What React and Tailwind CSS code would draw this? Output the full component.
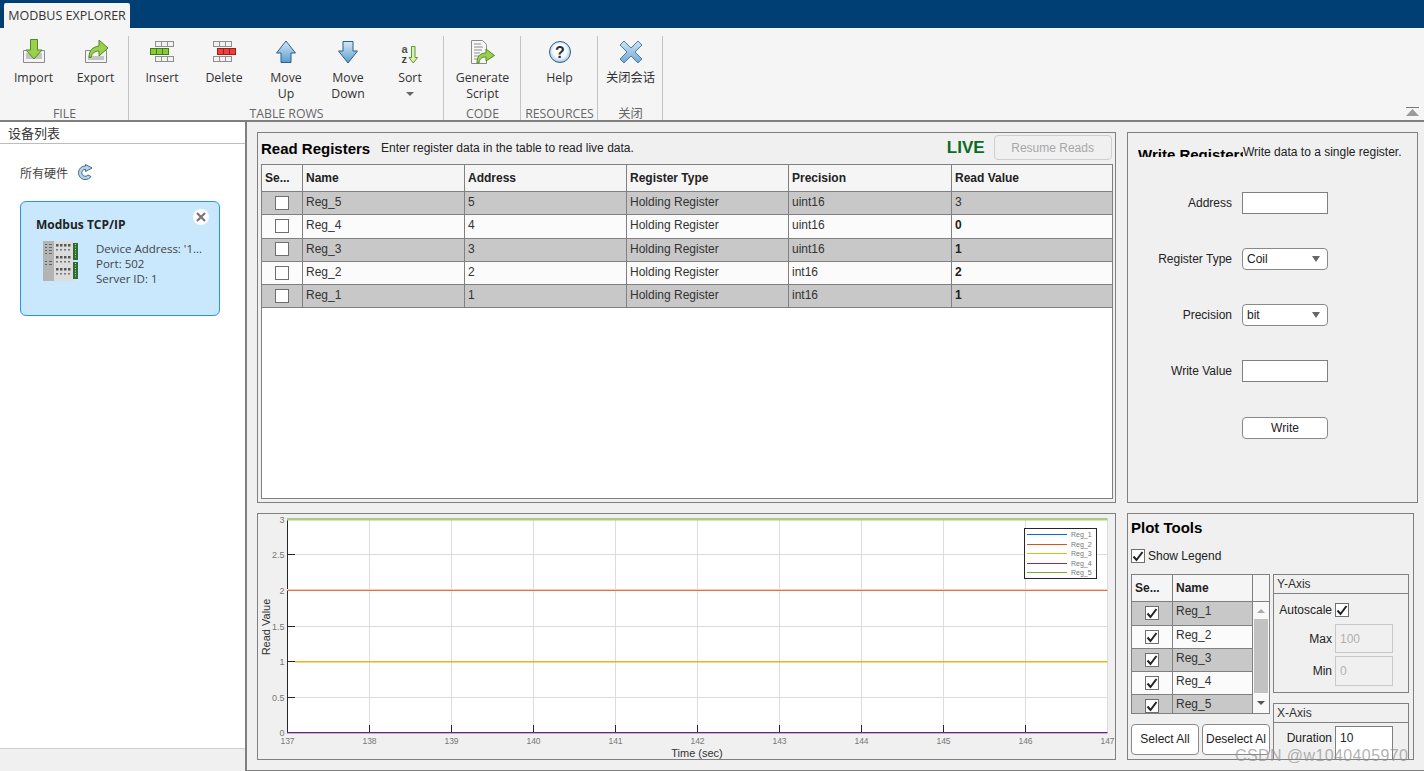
import React from "react";

const ui = "font-['Liberation_Sans',Arial,sans-serif]";
const ribbonFont = "font-['Open_Sans','Noto_Sans_CJK_SC',sans-serif]";

function ImportIcon() {
  return (
    <svg width="26" height="26" viewBox="0 0 26 26">
      <path d="M2.500 11.500h21v12h-21z" fill="#f4f4f4" stroke="#8a8a8a" />
      <path d="M5 14h16v6H5z" fill="#c4c4c4" />
      <path d="M9.500 .500h7v10.500h4.500l-8 9-8-9h4.500z" fill="#9bd04e" stroke="#4f8a1e" />
    </svg>
  );
}
function ExportIcon() {
  return (
    <svg width="26" height="26" viewBox="0 0 26 26">
      <path d="M2.500 11.500h21v12h-21z" fill="#f4f4f4" stroke="#8a8a8a" />
      <path d="M5 17h16v4H5z" fill="#c4c4c4" />
      <path d="M6 18.500C6 11 10 8 16 7V1l9 8-9 8v-5c-4 0-7 2-8 6.500z" fill="#9bd04e" stroke="#4f8a1e" />
    </svg>
  );
}
function Bricks({ fill, stroke, grayX, onX }) {
  const cell = (x, y, h, key, on) => (
    <rect key={key} x={x} y={y} width="6" height={h} fill={on ? fill : "#f2f2f2"} stroke={on ? stroke : "#8f8f8f"} />
  );
  return (
    <svg width="26" height="24" viewBox="0 0 26 24">
      {[0, 6, 12].map((x) => cell(x + grayX + 0.5, 1.5, 5, "a" + x, false))}
      {[0, 6, 12].map((x) => cell(x + onX + 0.5, 8.5, 6, "b" + x, true))}
      {[0, 6, 12].map((x) => cell(x + grayX + 0.5, 16.5, 5, "c" + x, false))}
    </svg>
  );
}
function ArrowUp() {
  return (
    <svg width="24" height="26" viewBox="0 0 24 26">
      <defs>
        <linearGradient id="up" x1="0" y1="0" x2="0" y2="1">
          <stop offset="0" stopColor="#d5e8f6" />
          <stop offset="1" stopColor="#5b9bcc" />
        </linearGradient>
      </defs>
      <path d="M12 2 21.500 14H17v9.500H7V14H2.500z" fill="url(#up)" stroke="#2b5f8c" />
    </svg>
  );
}
function ArrowDown() {
  return (
    <svg width="24" height="26" viewBox="0 0 24 26">
      <defs>
        <linearGradient id="dn" x1="0" y1="0" x2="0" y2="1">
          <stop offset="0" stopColor="#d5e8f6" />
          <stop offset="1" stopColor="#5b9bcc" />
        </linearGradient>
      </defs>
      <path d="M12 24 21.500 12H17V2.500H7V12H2.500z" fill="url(#dn)" stroke="#2b5f8c" />
    </svg>
  );
}
function SortIcon() {
  return (
    <svg width="22" height="24" viewBox="0 0 22 24">
      <text x="2.500" y="13" fontSize="11" fontWeight="700" fill="#555" fontFamily="Liberation Sans">a</text>
      <text x="2.500" y="23" fontSize="11" fontWeight="700" fill="#444" fontFamily="Liberation Sans">z</text>
      <path d="M12.500 6.500h3.500v11h2.500l-4.250 5.500-4.250-5.500h2.500z" fill="#d9f0b8" stroke="#5d9a25" />
    </svg>
  );
}
function ScriptIcon() {
  return (
    <svg width="26" height="26" viewBox="0 0 26 26">
      <path d="M1.500 1.500h11l4 4v19h-15z" fill="#f8f8f8" stroke="#8a8a8a" />
      <path d="M4 5h7M4 8h9M4 11h8M4 14h6M4 17h5M4 20h5" stroke="#8e8e8e" />
      <path d="M7 24c0-7 3.500-10 9-10v-4l8.500 6.500L16 22v-4c-4 0-6.500 1.500-7 6z" fill="#9bd04e" stroke="#4f8a1e" />
    </svg>
  );
}
function HelpIcon() {
  return (
    <svg width="24" height="24" viewBox="0 0 24 24">
      <defs>
        <radialGradient id="hp" cx="0.5" cy="0.45" r="0.6">
          <stop offset="0.5" stopColor="#ffffff" />
          <stop offset="1" stopColor="#8fbbdc" />
        </radialGradient>
      </defs>
      <circle cx="12" cy="12" r="10.500" fill="url(#hp)" stroke="#2f5f88" />
      <text x="12" y="17.500" textAnchor="middle" fontSize="16" fontWeight="700" fill="#222f3a" fontFamily="Liberation Sans">?</text>
    </svg>
  );
}
function CloseIcon() {
  return (
    <svg width="24" height="24" viewBox="0 0 24 24">
      <defs>
        <linearGradient id="cx" x1="0" y1="0" x2="0" y2="1">
          <stop offset="0" stopColor="#cfe4f4" />
          <stop offset="1" stopColor="#6fa8d2" />
        </linearGradient>
      </defs>
      <path d="M5 1 12 8l7-7 4 4-7 7 7 7-4 4-7-7-7 7-4-4 7-7-7-7z" fill="url(#cx)" stroke="#4d7da3" />
    </svg>
  );
}
function RefreshIcon() {
  return (
    <svg width="17" height="17" viewBox="0 0 17 17">
      <path d="M15 12.500A6.800 6.800 0 1 1 9.500 2V.500L16 4l-6.500 3.500V5.300A3.500 3.500 0 1 0 12 11z" fill="#b7d3e8" stroke="#3d6a8f" strokeWidth="1" />
    </svg>
  );
}
function DeviceIcon() {
  const dots = [];
  [3, 15, 27].forEach((y) => {
    [13, 17, 21, 25].forEach((x) => {
      dots.push(<rect key={x + "-" + y} x={x} y={y} width="2.500" height="2.500" fill="#555" />);
      dots.push(<rect key={x + "+" + y} x={x} y={y + 5} width="2" height="1.500" fill="#777" />);
    });
  });
  return (
    <svg width="36" height="40" viewBox="0 0 36 40">
      <rect x="0" y="0" width="11" height="40" fill="#b4b4b4" />
      <rect x="11" y="0" width="20" height="40" fill="#dcdcdc" />
      {[3, 6, 9, 12, 20, 23].map((y) => (
        <path key={y} d={`M2 ${y + 0.5}h2M6 ${y + 0.5}h3`} stroke="#666" />
      ))}
      {dots}
      <rect x="30" y="2" width="5" height="17" fill="#2f6b33" />
      <rect x="30" y="21" width="5" height="17" fill="#2f6b33" />
      <path d="M32.500 3v15M32.500 22v15" stroke="#b9dca8" strokeDasharray="1 1.500" />
    </svg>
  );
}

function RibbonButton({ icon, label, second, caret }) {
  return (
    <div className="w-[62px] flex flex-col items-center shrink-0">
      <div className="h-[28px] mt-[10px] flex items-center justify-center">{icon}</div>
      <div className="mt-[4px] text-[12.300px] leading-[16px] text-[#333] text-center whitespace-nowrap">
        <div>{label}</div>
        {second && <div>{second}</div>}
        {caret && <div className="mt-[6px] mx-auto w-0 h-0 border-x-[4px] border-x-transparent border-t-[4px] border-t-[#666]" />}
      </div>
    </div>
  );
}

function RibbonGroup({ width, title, children, inner = "justify-center" }) {
  return (
    <div className="relative h-full shrink-0 flex flex-col" style={{ width }}>
      <div className={"flex flex-1 " + inner}>{children}</div>
      <div className="h-[13px] text-center text-[12.300px] leading-[13px] text-[#666] whitespace-nowrap">{title}</div>
      <div className="absolute right-0 top-[8px] bottom-0 w-px bg-[#c4c4c4]" />
    </div>
  );
}

function Check({ on }) {
  return (
    <div className="w-[14px] h-[14px] shrink-0 bg-white border border-[#6e6e6e] flex items-center justify-center">
      {on && (
        <svg width="12" height="12" viewBox="0 0 12 12">
          <path d="M1.500 6.500 4.500 10 10.500 2" fill="none" stroke="#222" strokeWidth="2" />
        </svg>
      )}
    </div>
  );
}

const registers = [
  { name: "Reg_5", addr: "5", prec: "uint16", val: "3", h: "h-[23px]", ck: "pt-[4px]" },
  { name: "Reg_4", addr: "4", prec: "uint16", val: "0", h: "h-[24px]", ck: "pt-[4px]", bold: true },
  { name: "Reg_3", addr: "3", prec: "uint16", val: "1", h: "h-[23px]", ck: "pt-[3px]", bold: true },
  { name: "Reg_2", addr: "2", prec: "int16", val: "2", h: "h-[23px]", ck: "pt-[4px]", bold: true },
  { name: "Reg_1", addr: "1", prec: "int16", val: "1", h: "h-[23px]", ck: "pt-[4px]", bold: true },
];

function Cell({ className, children }) {
  return <div className={"h-full flex items-center pl-[3px] pb-[3px] border-r border-[#808080] shrink-0 " + className}>{children}</div>;
}

function HeadCell({ className, children }) {
  return <div className={"h-full flex items-center pl-[3px] pb-[1px] border-r border-[#808080] shrink-0 " + className}>{children}</div>;
}

function ReadTable() {
  return (
    <div className="w-[852px] h-[335px] bg-white border border-[#808080] text-[12px] text-[#333]">
      <div className="flex h-[27px] bg-[#f5f5f5] border-b border-[#808080] font-bold text-[#222]">
        <HeadCell className="w-[41px]">Se...</HeadCell>
        <HeadCell className="w-[162px]">Name</HeadCell>
        <HeadCell className="w-[162px]">Address</HeadCell>
        <HeadCell className="w-[162px]">Register Type</HeadCell>
        <HeadCell className="w-[163px]">Precision</HeadCell>
        <div className="flex-1 flex items-center pl-[3px] pb-[1px]">Read Value</div>
      </div>
      {registers.map((r, i) => (
        <div key={r.name} className={"flex border-b border-[#808080] " + r.h + " " + (i % 2 === 0 ? "bg-[#c8c8c8]" : "bg-[#fbfbfb]")}>
          <div className={"w-[41px] h-full flex items-start justify-center border-r border-[#808080] shrink-0 " + r.ck}><Check /></div>
          <Cell className="w-[162px]">{r.name}</Cell>
          <Cell className="w-[162px]">{r.addr}</Cell>
          <Cell className="w-[162px]">Holding Register</Cell>
          <Cell className="w-[163px]">{r.prec}</Cell>
          <div className={"flex-1 flex items-center pl-[3px] pb-[3px] " + (r.bold ? "font-bold text-[#222]" : "")}>{r.val}</div>
        </div>
      ))}
    </div>
  );
}

function Field({ label, mt, children }) {
  return (
    <div className="flex items-center h-[22px]" style={{ marginTop: mt }}>
      <div className="w-[94px] text-right text-[12px] text-[#222] whitespace-nowrap">{label}</div>
      <div className="ml-[10px]">{children}</div>
    </div>
  );
}

function Dropdown({ value }) {
  return (
    <div className="w-[86px] h-[22px] bg-white border border-[#8a8a8a] rounded-[4px] flex items-center justify-between pl-[4px] pr-[7px] text-[12px] text-[#222]">
      <span>{value}</span>
      <span className="w-0 h-0 border-x-[4px] border-x-transparent border-t-[6px] border-t-[#666]" />
    </div>
  );
}

function WritePanel() {
  return (
    <div className="w-[291px] h-[371px] border border-[#808080] pl-[10px]">
      <div className="flex mt-[14px] h-[10px]">
        <div className="w-[105px] h-[10px] overflow-hidden text-[15px] leading-[15px] font-bold text-black whitespace-nowrap">Write Registers</div>
        <div className="text-[12px] leading-[10px] text-[#222] whitespace-nowrap">Write data to a single register.</div>
      </div>
      <Field label="Address" mt="35px">
        <div className="w-[86px] h-[22px] bg-white border border-[#808080]" />
      </Field>
      <Field label="Register Type" mt="34px"><Dropdown value="Coil" /></Field>
      <Field label="Precision" mt="34px"><Dropdown value="bit" /></Field>
      <Field label="Write Value" mt="34px">
        <div className="w-[86px] h-[22px] bg-white border border-[#808080]" />
      </Field>
      <div className="ml-[104px] mt-[35px] w-[86px] h-[22px] bg-white border border-[#8a8a8a] rounded-[4px] text-[12px] text-[#222] flex items-center justify-center">Write</div>
    </div>
  );
}

const xTicks = [137, 138, 139, 140, 141, 142, 143, 144, 145, 146, 147];
const yTicks = [["3", 519.5], ["2.5", 554.5], ["2", 590.5], ["1.5", 626.5], ["1", 661.5], ["0.5", 697.5], ["0", 732.5]];
const legend = [
  ["Reg_1", "#0072bd", 534.5],
  ["Reg_2", "#d95319", 544.5],
  ["Reg_3", "#edb120", 553.5],
  ["Reg_4", "#7e2f8e", 563.5],
  ["Reg_5", "#77ac30", 572.5],
];

function PlotChart() {
  return (
    <svg width="857" height="245" viewBox="258 514 857 245" fontFamily="Liberation Sans">
      <rect x="287" y="519" width="820.500" height="214" fill="#fff" />
      {xTicks.map((t, i) => {
        const x = 287.5 + 82 * i;
        return (
          <g key={t}>
            {i > 0 && <path d={`M${x} 519V733`} stroke="#dcdcdc" />}
            {i > 0 && i < 10 && <path d={`M${x} 725V733`} stroke="#262626" />}
            <text x={x} y="743.500" textAnchor="middle" fontSize="8.500" fill="#777">{t}</text>
          </g>
        );
      })}
      {yTicks.map(([label, y]) => (
        <g key={label}>
          <path d={`M287 ${y}H1107.500`} stroke="#dcdcdc" />
          <path d={`M287 ${y}H295`} stroke="#262626" />
          <text x="284.500" y={y + 3} textAnchor="end" fontSize="9" fill="#777">{label}</text>
        </g>
      ))}
      <path d="M287.500 519V733" stroke="#262626" />
      <rect x="287" y="518" width="820.500" height="2.500" fill="#a9cc82" />
      <rect x="287" y="590" width="820.500" height="1" fill="#e8703f" />
      <rect x="287" y="589" width="820.500" height="1" fill="#f6cdbd" />
      <rect x="295" y="661" width="812.500" height="1.500" fill="#edb120" />
      <rect x="287" y="732" width="820.500" height="1" fill="#5e2a6e" />
      <rect x="287" y="733" width="820.500" height="1" fill="#c9aed2" />
      <rect x="1024.500" y="528.500" width="72" height="50" fill="#fff" stroke="#262626" />
      {legend.map(([name, color, y]) => (
        <g key={name}>
          <path d={`M1027 ${y}H1067`} stroke={color} />
          <text x="1071" y={y + 2.5} fontSize="7" fill="#777">{name}</text>
        </g>
      ))}
      <text x="697" y="757" textAnchor="middle" fontSize="11" fill="#333">Time (sec)</text>
      <text transform="translate(270 627) rotate(-90)" textAnchor="middle" fontSize="11" fill="#333">Read Value</text>
    </svg>
  );
}

const plotRows = [
  ["Reg_1", "h-[24px]"],
  ["Reg_2", "h-[23px]"],
  ["Reg_3", "h-[23px]"],
  ["Reg_4", "h-[23px]"],
  ["Reg_5", "h-[19px]"],
];

function PlotRegTable() {
  return (
    <div className="w-[139px] h-[140px] bg-white border border-[#808080] flex text-[12px] text-[#333] overflow-hidden">
      <div className="w-[120px] shrink-0">
        <div className="flex h-[27px] bg-[#f5f5f5] border-b border-[#808080] font-bold text-[#222]">
          <HeadCell className="w-[41px]">Se...</HeadCell>
          <div className="flex-1 flex items-center pl-[3px] pb-[1px]">Name</div>
        </div>
        {plotRows.map(([name, h], i) => (
          <div key={name} className={"flex border-b border-[#808080] " + h + " " + (i % 2 === 0 ? "bg-[#c8c8c8]" : "bg-[#fbfbfb]")}>
            <div className="w-[41px] h-full flex items-start pt-[4px] justify-center border-r border-[#808080] shrink-0"><Check on /></div>
            <div className="flex-1 pl-[3px]">{name}</div>
          </div>
        ))}
      </div>
      <div className="flex-1 flex flex-col border-l border-[#808080]">
        <div className="h-[27px] bg-[#f5f5f5] border-b border-[#808080]" />
        <div className="flex-1 flex flex-col items-center bg-[#f8f8f8] px-[1px]">
          <span className="mt-[7px] w-0 h-0 border-x-[4px] border-x-transparent border-b-[4px] border-b-[#aaa]" />
          <div className="w-[14px] h-[74px] mt-[6px] bg-[#c2c2c2]" />
          <span className="mt-[8px] w-0 h-0 border-x-[4px] border-x-transparent border-t-[4px] border-t-[#555]" />
        </div>
      </div>
    </div>
  );
}

function AxisBox({ title, className, children }) {
  return (
    <div className={"w-[136px] border border-[#808080] shrink-0 " + className}>
      <div className="h-[19px] border-b border-[#808080] pl-[3px] text-[12px] leading-[18px] text-[#333]">{title}</div>
      {children}
    </div>
  );
}

function PlotTools() {
  return (
    <div className="w-[287px] h-[247px] border border-[#808080] pl-[3px] overflow-hidden">
      <div className="h-[27px] pt-[5px] text-[15px] leading-[17px] font-bold text-black">Plot Tools</div>
      <div className="mt-[7px] flex items-center gap-[3px] text-[12px] text-[#222] h-[15px]">
        <Check on />
        <span>Show Legend</span>
      </div>
      <div className="mt-[11px] flex gap-[3px]">
        <div className="w-[139px] shrink-0">
          <PlotRegTable />
          <div className="mt-[10px] flex gap-[3px]">
            <div className="w-[68px] h-[31px] pb-[1px] bg-white border border-[#8a8a8a] rounded-[4px] flex items-center justify-center text-[12px] text-[#222]">Select All</div>
            <div className="w-[68px] h-[31px] pb-[1px] bg-white border border-[#8a8a8a] rounded-[4px] overflow-hidden flex items-center justify-center text-[12px] text-[#222] whitespace-nowrap">Deselect Al</div>
          </div>
        </div>
        <div className="flex flex-col text-[12px] text-[#222]">
          <AxisBox title="Y-Axis" className="h-[119px]">
            <div className="mt-[8px] flex items-center h-[15px]">
              <div className="w-[58px] text-right whitespace-nowrap">Autoscale</div>
              <div className="ml-[3px]"><Check on /></div>
            </div>
            <div className="mt-[7px] flex items-center">
              <div className="w-[58px] text-right">Max</div>
              <div className="ml-[3px] w-[58px] h-[29px] border border-[#c8c8c8] pl-[4px] flex items-center text-[#b0b0b0]">100</div>
            </div>
            <div className="mt-[3px] flex items-center">
              <div className="w-[58px] text-right">Min</div>
              <div className="ml-[3px] w-[58px] h-[30px] border border-[#c8c8c8] pl-[4px] flex items-center text-[#b0b0b0]">0</div>
            </div>
          </AxisBox>
          <AxisBox title="X-Axis" className="mt-[10px] h-[60px]">
            <div className="mt-[3px] flex items-start">
              <div className="w-[58px] mt-[3px] text-right">Duration</div>
              <div className="ml-[3px] w-[58px] h-[36px] bg-white border border-[#808080] pl-[4px] pt-[2px]">10</div>
            </div>
          </AxisBox>
        </div>
      </div>
    </div>
  );
}

export default function App() {
  return (
    <div className={"relative w-[1424px] h-[771px] overflow-hidden bg-[#f0f0f0] " + ui}>
      <div className="h-[28px] bg-[#003f73] pl-[4px] pt-[3px]">
        <div className={"w-[126px] h-[25px] bg-[#f5f5f5] rounded-t-[2px] text-center text-[12.500px] leading-[25px] text-[#333] whitespace-nowrap " + ribbonFont}>MODBUS EXPLORER</div>
      </div>

      <div className={"relative h-[94px] bg-[#f5f5f5] border-b-2 border-[#7f7f7f] flex " + ribbonFont}>
        <RibbonGroup width="129px" title="FILE">
          <RibbonButton icon={<ImportIcon />} label="Import" />
          <RibbonButton icon={<ExportIcon />} label="Export" />
        </RibbonGroup>
        <RibbonGroup width="315px" title="TABLE ROWS" inner="justify-start pl-[2px]">
          <RibbonButton icon={<Bricks fill="#8ec63f" stroke="#3f7d17" grayX={6} onX={1} />} label="Insert" />
          <RibbonButton icon={<Bricks fill="#e9413e" stroke="#a31c1c" grayX={2} onX={6} />} label="Delete" />
          <RibbonButton icon={<ArrowUp />} label="Move" second="Up" />
          <RibbonButton icon={<ArrowDown />} label="Move" second="Down" />
          <RibbonButton icon={<SortIcon />} label="Sort" caret />
        </RibbonGroup>
        <RibbonGroup width="77px" title="CODE">
          <RibbonButton icon={<ScriptIcon />} label="Generate" second="Script" />
        </RibbonGroup>
        <RibbonGroup width="77px" title="RESOURCES">
          <RibbonButton icon={<HelpIcon />} label="Help" />
        </RibbonGroup>
        <RibbonGroup width="65px" title="关闭">
          <RibbonButton icon={<CloseIcon />} label="关闭会话" />
        </RibbonGroup>
        <svg className="absolute left-[1406px] top-[79px]" width="13" height="11" viewBox="0 0 13 11">
          <path d="M0 .500H13" stroke="#777" />
          <path d="M6.500 2 13 9H0z" fill="#9a9a9a" />
        </svg>
      </div>

      <div className="flex h-[649px]">
        <div className="w-[247px] shrink-0 bg-white border-r-2 border-[#7f7f7f] flex flex-col">
          <div className="h-[22px] border-b border-[#bdbdbd] pl-[8px] text-[13px] leading-[21px] text-[#333] font-['Noto_Sans_CJK_SC',sans-serif]">设备列表</div>
          <div className="flex-1 pl-[20px]">
            <div className="mt-[20px] h-[17px] flex items-center gap-[8px] text-[12px] text-[#444] font-['Noto_Sans_CJK_SC',sans-serif]">
              <span>所有硬件</span>
              <RefreshIcon />
            </div>
            <div className={"relative mt-[20px] w-[200px] h-[115px] bg-[#c9e7fd] border border-[#2196f3] rounded-[6px] pl-[15px] pt-[14px] " + ribbonFont}>
              <div className="text-[12px] leading-[18px] font-bold text-[#222]">Modbus TCP/IP</div>
              <div className="flex mt-[7px] ml-[7px]">
                <DeviceIcon />
                <div className="ml-[17px] text-[11.500px] leading-[15px] text-[#444] whitespace-nowrap">
                  <div>Device Address: '1...</div>
                  <div>Port: 502</div>
                  <div>Server ID: 1</div>
                </div>
              </div>
              <div className="absolute right-[10px] top-[7px] w-[16px] h-[16px] rounded-full bg-white flex items-center justify-center">
                <svg width="10" height="10" viewBox="0 0 10 10">
                  <path d="M1 1 9 9M9 1 1 9" stroke="#777" strokeWidth="2.200" />
                </svg>
              </div>
            </div>
          </div>
          <div className="h-[23px] bg-[#f0f0f0] border-t border-[#cfcfcf]" />
        </div>

        <div className="flex-1 border-b border-[#7f7f7f] h-[649px] pl-[10px] pt-[10px] flex gap-[11px]">
          <div className="w-[859px] shrink-0 flex flex-col">
            <div className="h-[371px] border border-[#808080] pl-[3px]">
              <div className="h-[31px] flex items-center">
                <div className="w-[120px] mt-[1px] text-[15px] font-bold text-black">Read Registers</div>
                <div className="text-[12px] text-[#222] -mt-[2px] whitespace-nowrap">Enter register data in the table to read live data.</div>
                <div className="ml-[313px] text-[17px] leading-[20px] font-bold text-[#0b6b1f] -mt-[1px]">LIVE</div>
                <div className="ml-[9px] -mt-[2px] w-[118px] h-[25px] border border-[#cfcfcf] rounded-[4px] flex items-center justify-center text-[12px] text-[#a8a8a8]">Resume Reads</div>
              </div>
              <ReadTable />
            </div>
            <div className="mt-[10px] h-[247px] border border-[#808080]">
              <PlotChart />
            </div>
          </div>
          <div className="flex flex-col">
            <WritePanel />
            <div className="mt-[10px]"><PlotTools /></div>
          </div>
        </div>
      </div>

      <div className="absolute left-[1235px] top-[747px] text-[16px] leading-[18px] tracking-[0.4px] text-[#8f8f8f]/70 whitespace-nowrap">CSDN @w1040405970</div>
    </div>
  );
}
